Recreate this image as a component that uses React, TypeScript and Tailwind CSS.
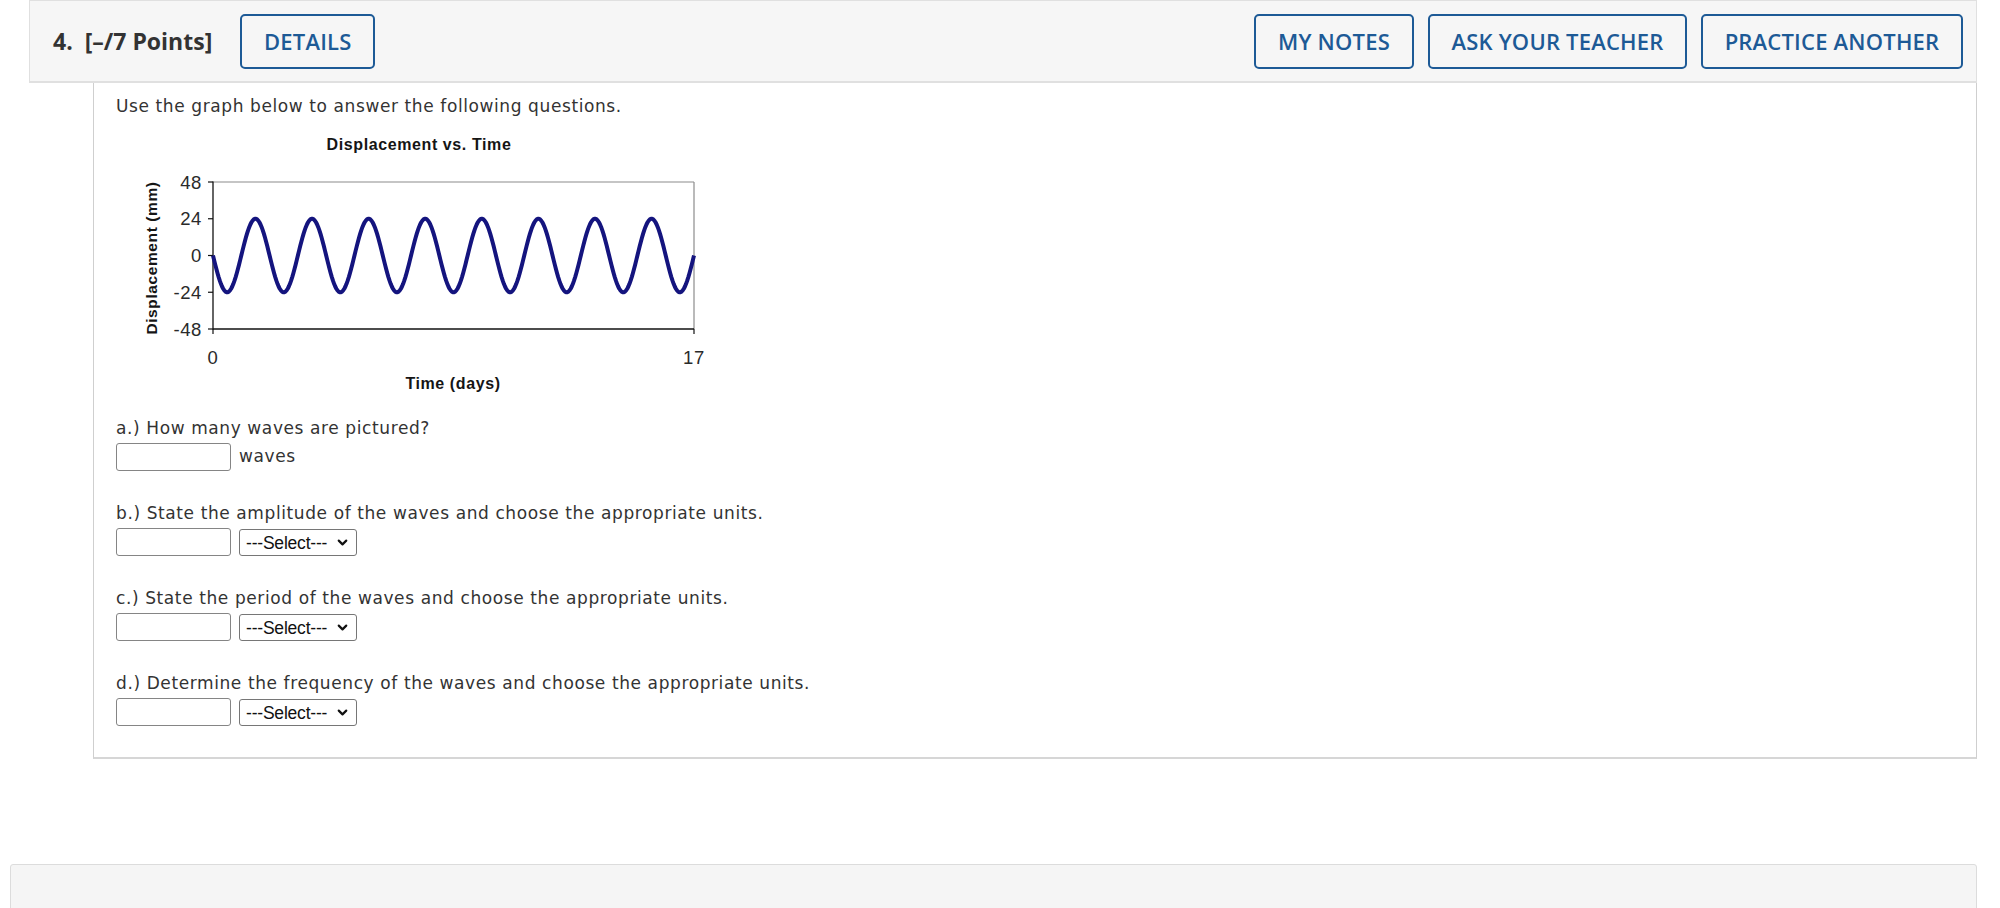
import { ChevronDown } from "lucide-react";

const blue = "text-[#1d5a96] border-[#1d5a96]";

function HeaderButton({ label, width }: { label: string; width: string }) {
  return (
    <button
      type="button"
      className={`${width} ${blue} h-[55px] shrink-0 rounded-[5px] border-2 bg-transparent font-['Open_Sans',sans-serif] text-[22px] font-semibold tracking-[0.2px]`}
    >
      {label}
    </button>
  );
}

function Answer() {
  return <input type="text" className="h-[28px] w-[115px] rounded-[3px] border border-[#858585] bg-white" />;
}

function UnitSelect() {
  return (
    <div className="relative h-[27px] w-[118px]">
      <select className="h-full w-full appearance-none rounded-[3px] border border-[#767676] bg-white pl-[6px] font-['Liberation_Sans',Arial,sans-serif] text-[17.5px] tracking-[-0.2px] text-[#111]">
        <option>---Select---</option>
      </select>
      <ChevronDown
        size={15}
        strokeWidth={3.5}
        className="pointer-events-none absolute right-[7px] top-[6px] text-[#111]"
      />
    </div>
  );
}

const chartFont = "Liberation Sans, Arial, sans-serif";

function Chart() {
  // plot area in page coordinates: x 212..693, y 182..329
  const x0 = 212;
  const x1 = 693;
  const mid = 255.5;
  const amp = 36.75;
  const pts: string[] = [];
  for (let t = 0; t <= 17.0001; t += 0.04) {
    const x = x0 + (t * (x1 - x0)) / 17;
    const y = mid + amp * Math.sin(Math.PI * t);
    pts.push(`${x.toFixed(2)},${y.toFixed(2)}`);
  }
  const yTicks: [string, number][] = [
    ["48", 182],
    ["24", 218.75],
    ["0", 255.5],
    ["-24", 292.25],
    ["-48", 329],
  ];
  return (
    <svg width="600" height="290" viewBox="115 120 600 290" className="block">
      <text x="418" y="150" textAnchor="middle" fontFamily={chartFont} fontWeight="700" fontSize="16" fill="#151515">
        Displacement vs. Time
      </text>
      <line x1={x0} y1="182" x2={x1} y2="182" stroke="#8c8c8c" strokeWidth="1.2" />
      <line x1={x1} y1="182" x2={x1} y2="329" stroke="#8c8c8c" strokeWidth="1.2" />
      <line x1={x0} y1="181.5" x2={x0} y2="329.5" stroke="#111" strokeWidth="1.3" />
      <line x1={x0} y1="329" x2={x1} y2="329" stroke="#111" strokeWidth="1.3" />
      {yTicks.map(([label, y]) => (
        <g key={label}>
          <line x1="207" y1={y} x2={x0} y2={y} stroke="#111" strokeWidth="1.2" />
          <text x="201" y={y + 6.5} textAnchor="end" fontFamily={chartFont} fontSize="18.5" fill="#2a2a2a">
            {label}
          </text>
        </g>
      ))}
      <line x1={x0} y1="329" x2={x0} y2="334" stroke="#111" strokeWidth="1.2" />
      <line x1={x1} y1="329" x2={x1} y2="334" stroke="#111" strokeWidth="1.2" />
      <text x={x0} y="364" textAnchor="middle" fontFamily={chartFont} fontSize="18.5" fill="#2a2a2a">
        0
      </text>
      <text x={x1} y="364" textAnchor="middle" fontFamily={chartFont} fontSize="18.5" fill="#2a2a2a">
        17
      </text>
      <text x="452" y="389" textAnchor="middle" fontFamily={chartFont} fontWeight="700" fontSize="16" fill="#151515">
        Time (days)
      </text>
      <text
        x="150"
        y="258"
        transform="rotate(-90 150 258)"
        textAnchor="middle"
        dominantBaseline="central"
        fontFamily={chartFont}
        fontWeight="700"
        fontSize="15.5"
        fill="#151515"
      >
        Displacement (mm)
      </text>
      <polyline points={pts.join(" ")} fill="none" stroke="#14147e" strokeWidth="4" strokeLinejoin="round" />
    </svg>
  );
}

function Question({ text, children }: { text: string; children: React.ReactNode }) {
  return (
    <div className="mb-[31px]">
      <p className="leading-[22px]">{text}</p>
      <div className="mt-[4px] flex items-center gap-[8px]">{children}</div>
    </div>
  );
}

export default function App() {
  return (
    <div className="h-[908px] w-[2000px] overflow-hidden bg-white font-['DejaVu_Sans',Verdana,sans-serif] text-[17px] tracking-[0.6px] text-[#333]">
      <div className="ml-[29px] flex h-[83px] w-[1948px] items-center border border-b-2 border-[#e0e0e0] bg-[#f6f6f6] pl-[23px] pr-[13px] tracking-normal">
        <span className="font-['Open_Sans',sans-serif] text-[23px] font-bold text-[#333]">4.&nbsp; [–/7 Points]</span>
        <div className="ml-[28px]">
          <HeaderButton label="DETAILS" width="w-[135px]" />
        </div>
        <div className="ml-auto flex gap-[14px]">
          <HeaderButton label="MY NOTES" width="w-[160px]" />
          <HeaderButton label="ASK YOUR TEACHER" width="w-[259px]" />
          <HeaderButton label="PRACTICE ANOTHER" width="w-[262px]" />
        </div>
      </div>

      <div className="ml-[93px] w-[1884px] border-x border-b-2 border-x-[#cfcfcf] border-b-[#d6d6d6] pl-[22px] pt-[11px]">
        <p className="leading-[24px]">Use the graph below to answer the following questions.</p>
        <div className="mt-[2px]">
          <Chart />
        </div>
        <div className="mt-[7px]">
          <Question text="a.) How many waves are pictured?">
            <Answer />
            <span>waves</span>
          </Question>
          <Question text="b.) State the amplitude of the waves and choose the appropriate units.">
            <Answer />
            <UnitSelect />
          </Question>
          <Question text="c.) State the period of the waves and choose the appropriate units.">
            <Answer />
            <UnitSelect />
          </Question>
          <Question text="d.) Determine the frequency of the waves and choose the appropriate units.">
            <Answer />
            <UnitSelect />
          </Question>
        </div>
      </div>

      <div className="ml-[10px] mt-[105px] h-[60px] w-[1967px] rounded-t-[3px] border border-[#dcdcdc] bg-[#f5f5f5]" />
    </div>
  );
}
